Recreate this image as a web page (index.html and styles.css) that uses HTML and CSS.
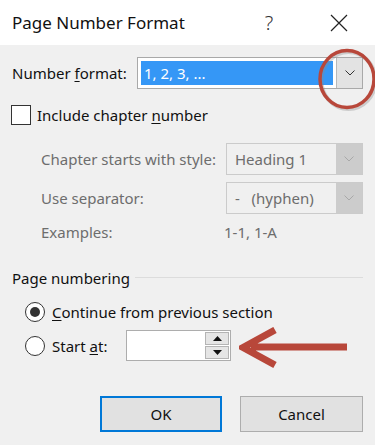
FILE: index.html
```html
<!DOCTYPE html>
<html lang="en">
<head>
	<meta charset="UTF-8">
	<meta name="viewport" content="width=device-width, initial-scale=1.0">
	<title>Page Number Format</title>
	<link rel="stylesheet" href="styles.css">
</head>
<body>
	<div class="titlebar">
		<span class="title">Page Number Format</span>
		<span class="help">?</span>
		<span class="close">
			<svg width="18" height="18" viewBox="0 0 18 18"><path d="M1 1 L17 17 M17 1 L1 17" stroke="#222" stroke-width="1.2" fill="none"/></svg>
		</span>
	</div>

	<div class="body">
		<div class="format-row">
			<span class="format-label">Number <u>f</u>ormat:</span>
			<div class="combo main-combo">
				<div class="combo-value"><span class="selected">1, 2, 3, ...</span></div>
				<div class="combo-btn">
					<svg width="10" height="6" viewBox="0 0 10 6"><path d="M0.5 0.5 L5 5 L9.5 0.5" stroke="#333" stroke-width="1" fill="none"/></svg>
				</div>
				<svg class="circle-mark" width="64" height="66" viewBox="0 0 64 66">
					<ellipse cx="31" cy="33" rx="27" ry="28.5" stroke="#8a8a8a" stroke-opacity="0.35" stroke-width="4" fill="none" transform="translate(1.5 1.5)"/>
					<ellipse cx="31" cy="33" rx="27" ry="28.5" stroke="#b8473a" stroke-width="3.5" fill="none"/>
				</svg>
			</div>
		</div>

		<div class="check-row">
			<span class="checkbox"></span>
			<span>Include chapter <u>n</u>umber</span>
		</div>

		<div class="chapter-grid">
			<span class="muted">Chapter starts with style:</span>
			<div class="combo disabled">
				<div class="combo-value">Heading 1</div>
				<div class="combo-btn">
					<svg width="10" height="6" viewBox="0 0 10 6"><path d="M0.5 0.5 L5 5 L9.5 0.5" stroke="#a8a8a8" stroke-width="1" fill="none"/></svg>
				</div>
			</div>
			<span class="muted">Use separator:</span>
			<div class="combo disabled">
				<div class="combo-value">-&nbsp;&nbsp;&nbsp;(hyphen)</div>
				<div class="combo-btn">
					<svg width="10" height="6" viewBox="0 0 10 6"><path d="M0.5 0.5 L5 5 L9.5 0.5" stroke="#a8a8a8" stroke-width="1" fill="none"/></svg>
				</div>
			</div>
			<span class="muted">Examples:</span>
			<span class="muted example">1-1, 1-A</span>
		</div>

		<div class="group-head">
			<span>Page numbering</span>
			<span class="rule"></span>
		</div>

		<div class="radio-row">
			<span class="radio checked"></span>
			<span><u>C</u>ontinue from previous section</span>
		</div>
		<div class="radio-row start-row">
			<span class="radio"></span>
			<span class="start-label">Start <u>a</u>t:</span>
			<div class="spin">
				<div class="spin-input"></div>
				<div class="spin-btns">
					<div class="spin-btn"><svg width="9" height="5" viewBox="0 0 9 5"><path d="M0 5 L4.5 0 L9 5 Z" fill="#111"/></svg></div>
					<div class="spin-btn"><svg width="9" height="5" viewBox="0 0 9 5"><path d="M0 0 L4.5 5 L9 0 Z" fill="#111"/></svg></div>
				</div>
			</div>
			<svg class="arrow-mark" width="110" height="42" viewBox="0 0 110 42">
				<path d="M108 20 L12 20 M36 3 L4 20.5 L36 38" stroke="#b8473a" stroke-width="7" fill="none" stroke-linejoin="miter"/>
			</svg>
		</div>

		<div class="buttons">
			<button class="btn default">OK</button>
			<button class="btn">Cancel</button>
		</div>
	</div>
</body>
</html>
```

FILE: styles.css
```css
* {
	box-sizing: border-box;
}
body {
	margin: 0;
	width: 375px;
	height: 445px;
	overflow: hidden;
	font-family: "Noto Sans", "Open Sans", sans-serif;
	font-size: 15px;
	color: #111;
	background-color: #f0f0f0;
}
u {
	text-decoration-thickness: 1px;
	text-underline-offset: 2px;
}

/* title bar */
.titlebar {
	height: 45px;
	background-color: white;
	display: flex;
	align-items: center;
	padding: 0 13px 0 12px;
}
.title {
	flex: 1;
	font-size: 17px;
	color: #111;
}
.help {
	width: 46px;
	text-align: center;
	font-size: 20px;
	font-weight: 300;
	color: #333;
	margin-right: 24px;
}
.close {
	width: 46px;
	display: flex;
	justify-content: center;
}

.body {
	padding: 12px 12px 0 12px;
}

/* number format */
.format-row {
	display: flex;
	align-items: center;
	height: 32px;
}
.format-label {
	width: 125px;
}
.combo {
	position: relative;
	display: flex;
	height: 32px;
	border: 1px solid #a9a9a9;
	background-color: white;
}
.main-combo {
	flex: 1;
}
.combo-value {
	flex: 1;
	display: flex;
	align-items: center;
	padding: 3px;
}
.selected {
	display: flex;
	align-items: center;
	height: 100%;
	width: 100%;
	padding-left: 3px;
	background-color: #3597f6;
	color: white;
}
.combo-btn {
	width: 26px;
	display: flex;
	align-items: center;
	justify-content: center;
	background-color: #e3e3e3;
	border-left: 1px solid #b9b9b9;
}
.circle-mark {
	position: absolute;
	left: 178px;
	top: -12px;
}

/* chapter number */
.check-row {
	display: flex;
	align-items: center;
	height: 20px;
	margin-top: 16px;
	margin-left: -1px;
}
.checkbox {
	width: 20px;
	height: 20px;
	border: 1px solid #333;
	background-color: white;
	margin-right: 6px;
}
.chapter-grid {
	display: grid;
	grid-template-columns: 185px 1fr;
	grid-template-rows: 32px 32px 22px;
	row-gap: 7px;
	align-items: center;
	margin-top: 18px;
	padding-left: 29px;
}
.muted {
	color: #6d6d6d;
}
.combo.disabled {
	background-color: #f0f0f0;
	border-color: #cbcbcb;
	color: #6d6d6d;
}
.combo.disabled .combo-value {
	padding-left: 8px;
}
.combo.disabled .combo-btn {
	background-color: #cccccc;
	border-left: none;
}
.example {
	padding-left: 0;
	margin-left: -2px;
}

/* page numbering */
.group-head {
	display: flex;
	align-items: center;
	height: 20px;
	margin-top: 25px;
}
.rule {
	flex: 1;
	height: 1px;
	background-color: #dcdcdc;
	margin-left: 5px;
	margin-top: -2px;
}
.radio-row {
	display: flex;
	align-items: center;
	height: 22px;
	margin-top: 13px;
	padding-left: 13px;
}
.radio {
	width: 20px;
	height: 20px;
	border: 1px solid #333;
	border-radius: 50%;
	background-color: white;
	margin-right: 7px;
	display: flex;
	align-items: center;
	justify-content: center;
}
.radio.checked::after {
	content: "";
	width: 10px;
	height: 10px;
	border-radius: 50%;
	background-color: #333;
}
.start-row {
	height: 31px;
	margin-top: 7px;
}
.start-label {
	width: 74px;
}
.spin {
	display: flex;
	width: 105px;
	height: 31px;
	border: 1px solid #adadad;
	background-color: white;
	padding: 1px;
}
.spin-input {
	flex: 1;
}
.spin-btns {
	width: 24px;
	display: flex;
	flex-direction: column;
	gap: 1px;
}
.spin-btn {
	flex: 1;
	display: flex;
	align-items: center;
	justify-content: center;
	background-color: #e5e5e5;
	border: 1px solid #b4b4b4;
}
.arrow-mark {
	margin-left: 8px;
	margin-top: 4px;
}

/* buttons */
.buttons {
	display: flex;
	justify-content: flex-end;
	gap: 18px;
	margin-top: 35px;
}
.btn {
	width: 123px;
	height: 36px;
	font-family: inherit;
	font-size: 15px;
	color: #111;
	background-color: #e1e1e1;
	border: 1px solid #adadad;
}
.btn.default {
	width: 122px;
	border: 2px solid #0078d7;
}
```
